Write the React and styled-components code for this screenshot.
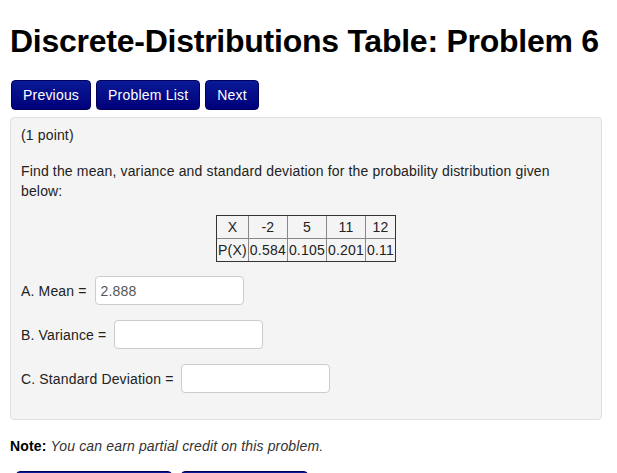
import React from "react";
import styled, { createGlobalStyle } from "styled-components";

const Global = createGlobalStyle`
  html, body { margin: 0; padding: 0; background: #fff; }
  body { font-family: "Liberation Sans", Arial, sans-serif; color: #222; }
`;

const Page = styled.div`
  padding: 0 15px 0 10px;
`;

const Title = styled.h1`
  margin: 0;
  padding-top: 23px;
  font-size: 32px;
  line-height: 36px;
  font-weight: bold;
  letter-spacing: -0.25px;
  color: #000;
  white-space: nowrap;
`;

const Nav = styled.div`
  display: flex;
  gap: 5px;
  margin-top: 21px;
  margin-left: 1px;
`;

const NavButton = styled.button`
  height: 30px;
  padding: 0 11px;
  border: 1px solid #00005a;
  border-radius: 4px;
  background: linear-gradient(#0a1a96, #00007a);
  color: #fff;
  font-family: "Liberation Sans", Arial, sans-serif;
  font-size: 14px;
  letter-spacing: 0.2px;
  cursor: pointer;
`;

const Well = styled.div`
  margin-top: 7px;
  background: #f4f4f4;
  border: 1px solid #e0e0e0;
  border-radius: 4px;
  padding: 7px 10px 26px 10px;
  font-size: 14px;
  letter-spacing: 0.15px;
`;

const Para = styled.p`
  margin: 0 0 ${(p) => p.$mb}px 0;
  line-height: 20px;
`;

const TableWrap = styled.div`
  display: flex;
  justify-content: center;
  margin-bottom: 14px;
`;

const Table = styled.table`
  border-collapse: separate;
  border-spacing: 0;
  border: 1px solid #333;
  font-size: 14px;
  letter-spacing: 0.2px;
`;

const Cell = styled.td`
  border-left: 1px solid #888;
  border-top: ${(p) => (p.$second ? "1px solid #888" : "none")};
  &:first-child { border-left: none; }
  text-align: center;
  padding: 0 1px;
  height: 22px;
  line-height: 16px;
`;

const Row = styled.div`
  display: flex;
  align-items: center;
  gap: 8px;
  margin-bottom: 15px;
  &:last-child { margin-bottom: 0; }
`;

const Input = styled.input`
  width: 149px;
  height: 29px;
  box-sizing: border-box;
  border: 1px solid #ccc;
  border-radius: 4px;
  background: #fff;
  padding: 0 5px;
  font-family: "Liberation Sans", Arial, sans-serif;
  font-size: 14px;
  letter-spacing: 0.15px;
  color: #555;
  outline: none;
`;

const Note = styled.p`
  margin: 16px 0 0 0;
  font-size: 14px;
  line-height: 20px;
  letter-spacing: 0.15px;
  color: #000;
  b { font-weight: bold; }
  i { color: #333; }
`;

const Bottom = styled.div`
  display: flex;
  gap: 9px;
  margin-top: 15px;
  margin-left: 6px;
`;

const BottomButton = styled.button`
  width: ${(p) => p.$w}px;
  height: 30px;
  border: 1px solid #00005a;
  border-radius: 4px;
  background: linear-gradient(#0a1a96, #00007a);
`;

export default function App() {
  const xs = ["X", "-2", "5", "11", "12"];
  const ps = ["P(X)", "0.584", "0.105", "0.201", "0.11"];
  return (
    <>
      <Global />
      <Page>
        <Title>Discrete-Distributions Table: Problem 6</Title>
        <Nav>
          <NavButton>Previous</NavButton>
          <NavButton>Problem List</NavButton>
          <NavButton>Next</NavButton>
        </Nav>
        <Well>
          <Para $mb={16}>(1 point)</Para>
          <Para $mb={14}>
            Find the mean, variance and standard deviation for the probability distribution given below:
          </Para>
          <TableWrap>
            <Table>
              <tbody>
                <tr>{xs.map((x, i) => <Cell key={i}>{x}</Cell>)}</tr>
                <tr>{ps.map((x, i) => <Cell key={i} $second>{x}</Cell>)}</tr>
              </tbody>
            </Table>
          </TableWrap>
          <Row>A. Mean = <Input defaultValue="2.888" /></Row>
          <Row>B. Variance = <Input /></Row>
          <Row>C. Standard Deviation = <Input /></Row>
        </Well>
        <Note><b>Note:</b> <i>You can earn partial credit on this problem.</i></Note>
        <Bottom>
          <BottomButton $w={156} />
          <BottomButton $w={127} />
        </Bottom>
      </Page>
    </>
  );
}
